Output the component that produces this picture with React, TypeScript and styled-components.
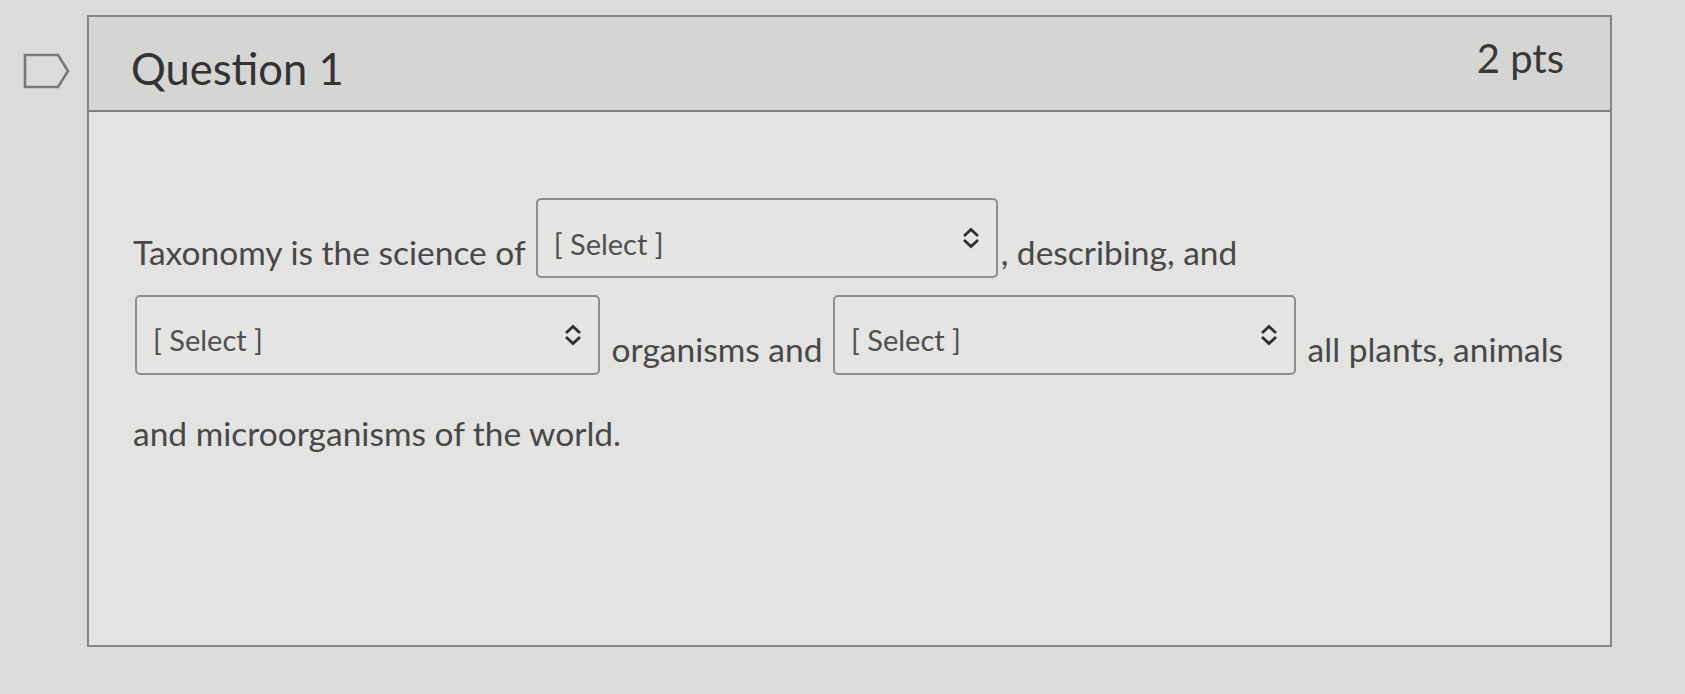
import React from "react";
import styled, { createGlobalStyle } from "styled-components";

const GlobalStyle = createGlobalStyle`
  html, body {
    margin: 0;
    padding: 0;
    background: #dcdcda;
  }
  body {
    font-family: Lato, "Open Sans", "Liberation Sans", sans-serif;
    color: #444;
  }
`;

const Page = styled.div`
  display: flex;
  align-items: flex-start;
  padding-top: 15px;
  width: 1685px;
  height: 694px;
  box-sizing: border-box;
  background: #dcdcda;
`;

const Gutter = styled.div`
  width: 87px;
  flex: none;
  box-sizing: border-box;
  padding: 38px 0 0 23px;
`;

const Card = styled.section`
  width: 1525px;
  flex: none;
  box-sizing: border-box;
  border: 2px solid #858583;
  display: flex;
  flex-direction: column;
  height: 632px;
`;

const Header = styled.header`
  height: 95px;
  flex: none;
  box-sizing: border-box;
  background: #d5d5d3;
  border-bottom: 2px solid #80807e;
  display: flex;
  align-items: center;
  justify-content: space-between;
  padding: 8px 46px 0 42px;
`;

const Title = styled.h2`
  margin: 0;
  font-weight: 400;
  font-size: 43.5px;
  color: #333;
`;

const Points = styled.div`
  font-size: 40px;
  color: #383838;
  margin-top: -20px;
`;

const Body = styled.div`
  flex: 1;
  background: #e3e3e1;
  padding: 86px 28px 0 44px;
  font-size: 33.5px;
  line-height: 85px;
  color: #484848;
`;

const Para = styled.p`
  margin: 0;
`;

const Phrase = styled.span`
  white-space: nowrap;
`;

const SelectBox = styled.span<{ $w: number }>`
  display: inline-flex;
  align-items: center;
  justify-content: space-between;
  box-sizing: border-box;
  width: ${(p) => p.$w}px;
  height: 80px;
  margin: 0 3px 0 2px;
  padding: 10px 16px 0 16px;
  border: 2px solid #8e8e8c;
  border-radius: 5px;
  background: #e5e5e3;
  vertical-align: 10px;
  line-height: normal;
  font-size: 29px;
  color: #505050;
`;

const SelectLabel = styled.span`
  white-space: nowrap;
`;

const Chevron = styled.svg`
  width: 18px;
  height: 22px;
  flex: none;
  margin-top: -10px;
`;

const Bookmark = () => (
  <svg width="48" height="36" viewBox="0 0 48 36" aria-hidden="true">
    <path
      d="M2 2 H35 L45 18 L35 34 H2 Z"
      fill="none"
      stroke="#787876"
      strokeWidth="2.6"
      strokeLinejoin="miter"
    />
  </svg>
);

const Select = ({ width }: { width: number }) => (
  <SelectBox $w={width} role="combobox" aria-label="Select">
    <SelectLabel>[ Select ]</SelectLabel>
    <Chevron viewBox="0 0 18 22" aria-hidden="true">
      <path d="M2 9 L9 2.5 L16 9" fill="none" stroke="#2f2f2f" strokeWidth="2.8" />
      <path d="M2 13 L9 19.5 L16 13" fill="none" stroke="#2f2f2f" strokeWidth="2.8" />
    </Chevron>
  </SelectBox>
);

export default function App() {
  return (
    <>
      <GlobalStyle />
      <Page>
        <Gutter>
          <Bookmark />
        </Gutter>
        <Card>
          <Header>
            <Title>Question 1</Title>
            <Points>2 pts</Points>
          </Header>
          <Body>
            <Para>
              <Phrase>Taxonomy is the science of</Phrase> <Select width={462} />
              <Phrase>, describing, and</Phrase> <Select width={465} />{" "}
              <Phrase>organisms and</Phrase> <Select width={463} />{" "}
              <Phrase>all plants, animals</Phrase>{" "}
              <Phrase>and microorganisms of the world.</Phrase>
            </Para>
          </Body>
        </Card>
      </Page>
    </>
  );
}
